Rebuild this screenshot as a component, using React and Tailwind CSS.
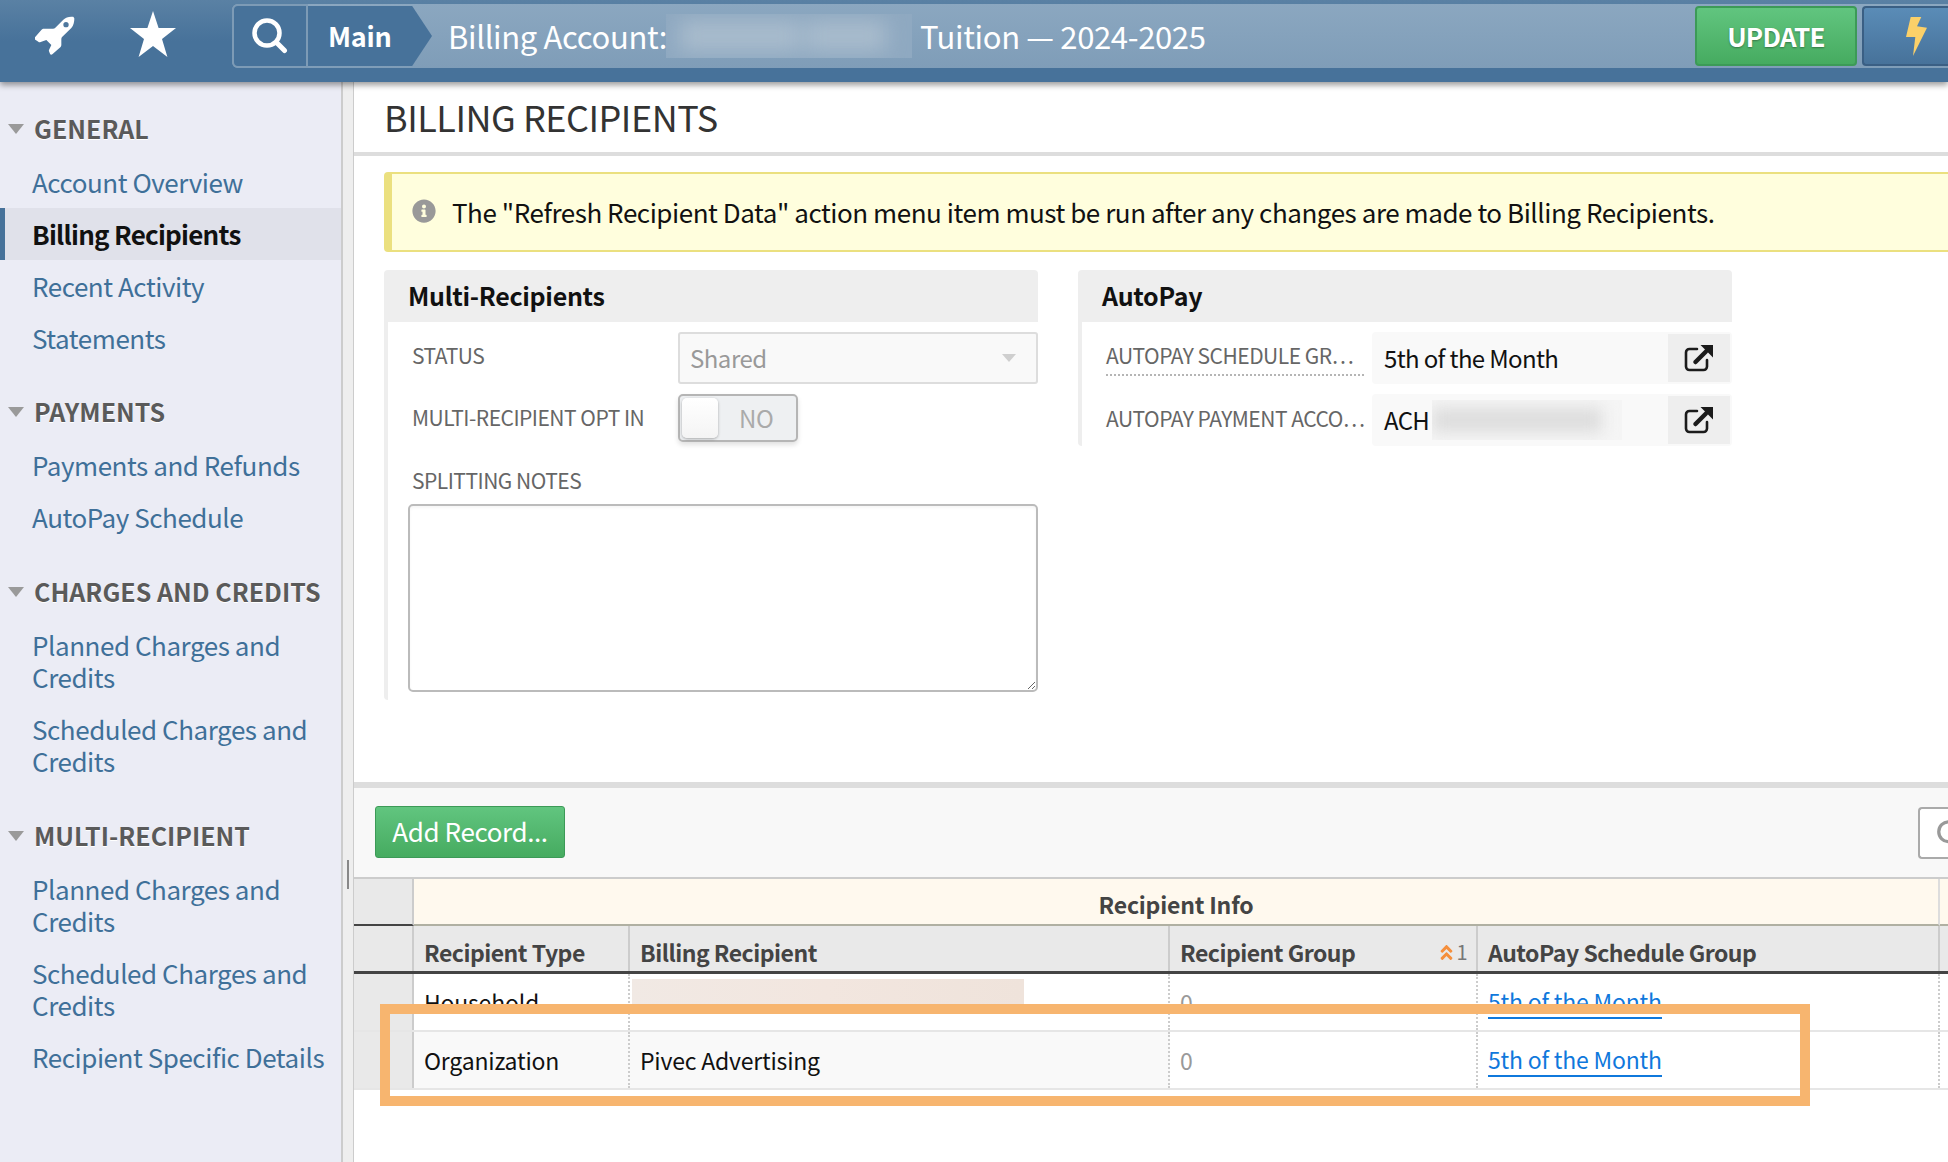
import React from "react";
import { FaInfoCircle, FaAngleDoubleUp } from "react-icons/fa";
import { Search } from "lucide-react";

function Rocket() {
  return (
    <svg viewBox="45 50 120 120" className="w-[40px] h-[40px]">
      <path fillRule="evenodd" fill="#fff" d="M158 53c3 0 5 2 5 5 0 9-2 20-9 28l-27 26c-2 2-3 4-3 7v18c0 3-1 5-3 7l-24 21c-3 2-6 1-7-2l-3-7c-1-2 0-4 1-6l6-13-15-15-17 6c-3 1-5 1-7-1l-9-6c-3-2-3-5-1-7l19-22c2-3 5-4 8-4h27c3 0 5-1 7-3l24-24c8-7 18-10 32-8zM138 68a8 8 0 1 0 0.1 16 8 8 0 1 0-0.1-16z" />
    </svg>
  );
}

function Star() {
  return (
    <svg viewBox="0 0 46 46" className="w-[46px] h-[46px]">
      <polygon fill="#fff" points="23,0 28.6,17 46,17 32,28 37.4,46 23,35 8.600,46 14,28 0,17 17.400,17" />
    </svg>
  );
}

function Bolt() {
  return (
    <svg viewBox="0 0 21 39" className="w-[21px] h-[39px]">
      <polygon fill="#fbd069" points="4.700,0 15.300,0 11,9.300 21,10.700 7,39 9.300,20 0,20" />
    </svg>
  );
}

function Magnifier() {
  return (
    <svg viewBox="0 0 36 36" className="w-[36px] h-[36px]" fill="none">
      <circle cx="15" cy="15" r="12.500" stroke="#fff" strokeWidth="4.500" />
      <line x1="24.500" y1="24.500" x2="32.500" y2="32.500" stroke="#fff" strokeWidth="5" strokeLinecap="round" />
    </svg>
  );
}

function ExternalLink() {
  return (
    <svg viewBox="0 0 32 32" className="w-[32px] h-[32px]" fill="none">
      <path d="M14 7H6.500C4.500 7 3 8.500 3 10.500v14C3 26.500 4.500 28 6.500 28h14c2 0 3.500-1.500 3.500-3.500V18" stroke="#1b1b1b" strokeWidth="2.600" strokeLinecap="round" />
      <path d="M12.500 20 L23 9.500" stroke="#1b1b1b" strokeWidth="4.500" strokeLinecap="round" />
      <polygon points="17.500,3 30,3 30,15.500" fill="#1b1b1b" />
    </svg>
  );
}

function Triangle() {
  return (
    <svg viewBox="0 0 16 10" className="w-[16px] h-[10px] shrink-0 mt-[1px]">
      <polygon points="0,0 16,0 8,10" fill="#9a9a9a" />
    </svg>
  );
}

function SectionHead({ label }) {
  return (
    <div className="h-[52px] mb-[2px] flex items-center pl-[8px] gap-[10px]">
      <Triangle />
      <span className="text-[25px] leading-[32px] font-bold text-[#5a5a5a] [text-shadow:0_1px_0_#fff]">{label}</span>
    </div>
  );
}

function NavLink({ label, active }) {
  if (active) {
    return (
      <div className="py-[10px] pl-[27px] border-l-[5px] border-[#47729a] bg-[#e0e1ea] text-[26px] tracking-[-0.75px] leading-[32px] font-semibold text-[#111]">{label}</div>
    );
  }
  return <div className="py-[10px] pl-[32px] pr-[8px] text-[26px] tracking-[-0.45px] leading-[32px] text-[#3f7099]">{label}</div>;
}

function Sidebar() {
  const groups = [
    ["GENERAL", "pt-[20px]", ["Account Overview", "Billing Recipients", "Recent Activity", "Statements"]],
    ["PAYMENTS", "pt-[21px]", ["Payments and Refunds", "AutoPay Schedule"]],
    ["CHARGES AND CREDITS", "pt-[22px]", ["Planned Charges and Credits", "Scheduled Charges and Credits"]],
    ["MULTI-RECIPIENT", "pt-[22px]", ["Planned Charges and Credits", "Scheduled Charges and Credits", "Recipient Specific Details"]],
  ];
  return (
    <aside className="w-[341px] shrink-0 bg-[#ebecf5]">
      {groups.map(([head, pad, items]) => (
        <div key={head} className={pad}>
          <SectionHead label={head} />
          {items.map((it) => (
            <NavLink key={it} label={it} active={it === "Billing Recipients"} />
          ))}
        </div>
      ))}
    </aside>
  );
}

function Header() {
  return (
    <header className="relative z-10 h-[82px] shrink-0 flex pt-[4px] bg-gradient-to-b from-[#5a81a4] to-[#47729a] to-50% shadow-[0_3px_6px_rgba(0,0,0,0.4)]">
      <div className="w-[232px] h-[64px] flex items-center shrink-0">
        <div className="ml-[35px]"><Rocket /></div>
        <div className="ml-[55px] -mt-[4px]"><Star /></div>
      </div>
      <div className="flex-1 h-[64px] flex items-center rounded-l-[6px] bg-gradient-to-b from-[#8ba7c0] to-[#7f9db8]">
        <div className="w-[76px] h-[64px] flex items-center justify-center rounded-l-[6px] border-[2px] border-[#7d9bb6] bg-[#47729a]">
          <Magnifier />
        </div>
        <div className="w-[124px] h-[60px] flex items-center pl-[20px] bg-[#47729a] [clip-path:polygon(0_0,84%_0,100%_50%,84%_100%,0_100%)] text-white text-[27px] tracking-[-0.2px] font-semibold">Main</div>
        <span className="w-[217px] ml-[16px] text-white text-[31px] tracking-[-0.35px] whitespace-nowrap">Billing Account:</span>
        <div className="w-[246px] h-[44px] ml-[1px] overflow-hidden bg-[#8fa9c1]">
          <div className="w-[246px] h-[44px] px-[14px] py-[8px] blur-[10px] flex items-center gap-[6px]">
            <div className="w-[120px] h-[30px] bg-[#a9bccd]" />
            <div className="w-[80px] h-[30px] bg-[#a9bccd]" />
          </div>
        </div>
        <span className="ml-[8px] text-white text-[31px] tracking-[-0.35px] whitespace-nowrap">Tuition — 2024-2025</span>
        <div className="ml-auto h-[60px] w-[162px] pb-[2px] mr-[5px] flex items-center justify-center rounded-[4px] border-[2px] border-[#3c9a57] bg-gradient-to-b from-[#61c57f] to-[#46ab60] text-white text-[26px] tracking-[-0.7px] font-bold [text-shadow:0_1px_2px_rgba(0,0,0,0.35)]">UPDATE</div>
        <div className="h-[60px] w-[86px] pl-[20px] flex items-center justify-center rounded-l-[4px] border-[2px] border-r-0 border-[#3a5f84] bg-gradient-to-b from-[#5a8cb7] to-[#47729a]">
          <Bolt />
        </div>
      </div>
    </header>
  );
}

function PanelHead({ title }) {
  return (
    <div className="h-[52px] flex items-center rounded-t-[4px] bg-[#eeeeee] pl-[24px] text-[25px] tracking-[-0.3px] font-semibold text-[#111]">{title}</div>
  );
}

function FieldLabel({ children, className = "" }) {
  return <span className={`text-[21px] tracking-[-0.5px] text-[#666] whitespace-nowrap ${className}`}>{children}</span>;
}

function MultiPanel() {
  return (
    <section className="w-[654px]">
      <PanelHead title="Multi-Recipients" />
      <div className="h-[378px] border-l-[4px] border-[#eeeeee] pl-[24px] pt-[10px] rounded-bl-[4px]">
        <div className="h-[52px] flex items-center">
          <FieldLabel className="w-[266px] -mt-[4px]">STATUS</FieldLabel>
          <div className="w-[360px] h-[52px] flex items-center justify-between pl-[10px] pr-[20px] rounded-[3px] border-[2px] border-[#dddddd] bg-[#f9f9f9] text-[24px] tracking-[-0.5px] text-[#999]">
            <span>Shared</span>
            <svg viewBox="0 0 14 8" className="w-[14px] h-[8px]"><polygon points="0,0 14,0 7,8" fill="#cfcfcf" /></svg>
          </div>
        </div>
        <div className="h-[48px] mt-[10px] flex items-center">
          <FieldLabel className="w-[266px]">MULTI-RECIPIENT OPT IN</FieldLabel>
          <div className="w-[120px] h-[48px] flex items-center pl-[2px] rounded-[5px] border-[2px] border-[#b5b5b5] bg-[#eef0f2] shadow-[0_3px_5px_rgba(0,0,0,0.12)]">
            <div className="w-[36px] h-[40px] rounded-[5px] bg-gradient-to-b from-white to-[#f4f4f4] shadow-[0_1px_3px_rgba(0,0,0,0.3)]" />
            <span className="ml-[21px] text-[24px] tracking-[-0.3px] text-[#aaa]">NO</span>
          </div>
        </div>
        <div className="h-[38px] mt-[20px] flex items-center"><FieldLabel>SPLITTING NOTES</FieldLabel></div>
        <textarea aria-label="Splitting notes" className="block w-[630px] h-[188px] -ml-[4px] mt-[4px] rounded-[5px] border-[2px] border-[#bbbbbb] bg-white shadow-[inset_0_2px_3px_rgba(0,0,0,0.04)]" />
      </div>
    </section>
  );
}

function AutoField({ label, dotted, children }) {
  return (
    <div className="h-[52px] flex items-center">
      <div className="w-[266px] pr-[8px] -mt-[2px]">
        <div className={`h-[38px] flex items-center ${dotted ? "border-b-[2px] border-dotted border-[#b5b5b5]" : ""}`}>
          <FieldLabel>{label}</FieldLabel>
        </div>
      </div>
      <div className="w-[360px] h-[52px] flex items-center rounded-[4px] bg-[#f9f9f9]">
        <div className="flex-1 flex items-center pl-[12px] text-[24px] tracking-[-0.65px] text-[#111] overflow-hidden">{children}</div>
        <div className="w-[62px] h-[48px] mr-[2px] flex items-center justify-center bg-[#eeeeee]">
          <ExternalLink />
        </div>
      </div>
    </div>
  );
}

function AutoPanel() {
  return (
    <section className="w-[654px]">
      <PanelHead title="AutoPay" />
      <div className="h-[124px] border-l-[4px] border-[#eeeeee] pl-[24px] pt-[10px] rounded-bl-[4px] flex flex-col gap-[10px]">
        <AutoField label="AUTOPAY SCHEDULE GR…" dotted>5th of the Month</AutoField>
        <AutoField label="AUTOPAY PAYMENT ACCO…">
          <span>ACH</span>
          <div className="ml-[3px] h-[40px] w-[190px] overflow-hidden bg-[#f5f5f5]">
            <div className="w-[170px] h-[40px] py-[8px] blur-[8px]"><div className="h-[24px] bg-[#dcdcdc]" /></div>
          </div>
        </AutoField>
      </div>
    </section>
  );
}

function HeadCell({ className = "", children }) {
  return (
    <div className={`h-[45px] flex items-center pl-[10px] pt-[7px] border-r-[2px] border-[#cccccc] text-[23px] tracking-[-0.5px] font-semibold text-[#444] ${className}`}>{children}</div>
  );
}

function BodyRow({ type, recipient, shaded, blur }) {
  const tint = shaded ? "bg-[#f9f9f9]" : "bg-white";
  const cell = "flex items-center pl-[10px] border-r-[2px] border-dotted border-[#cccccc] text-[23px] tracking-[-0.2px]";
  return (
    <div className="h-[58px] flex border-b-[2px] border-[#e6e6e6]">
      <div className="w-[60px] bg-[#e9e9e9] border-r-[2px] border-[#cccccc]" />
      <div className={`w-[216px] ${cell} ${tint} text-[#111]`}>{type}</div>
      <div className={`w-[540px] ${cell} ${tint} text-[#111]`}>
        {blur ? <div className="h-[26px] w-[392px] -ml-[8px] -mt-[20px] bg-gradient-to-r from-[#f1e9e4] via-[#f2e6df] to-[#efe3db]" /> : recipient}
      </div>
      <div className={`w-[308px] ${cell} text-[#999]`}>0</div>
      <div className={`w-[462px] ${cell}`}>
        <span className="leading-[32px] border-b-[2px] border-[#0f78dc] text-[#0f78dc]">5th of the Month</span>
      </div>
      <div className="flex-1" />
    </div>
  );
}

function RecordsTable() {
  return (
    <section className="border-t-[6px] border-[#dddddd]">
      <div className="h-[89px] flex items-center pl-[21px] bg-[#f8f8f8]">
        <div className="w-[190px] h-[52px] pb-[3px] -mt-[1px] flex items-center justify-center rounded-[3px] border-[1px] border-[#3c9a57] bg-gradient-to-b from-[#61c57f] to-[#46ab60] text-white text-[26px] tracking-[-0.4px]">Add Record...</div>
        <div className="ml-auto w-[30px] h-[52px] flex items-center pl-[15px] overflow-hidden rounded-l-[4px] border-[2px] border-r-0 border-[#aaaaaa] bg-white">
          <Search className="w-[30px] h-[30px] shrink-0 text-[#999]" strokeWidth={2.600} />
        </div>
      </div>
      <div className="h-[49px] flex border-t-[2px] border-[#cccccc]">
        <div className="w-[60px] bg-[#e9e9e9] border-r-[2px] border-[#cccccc] border-b-[2px] border-b-[#444]" />
        <div className="w-[1526px] flex items-center justify-center pt-[6px] bg-[#fff9ee] border-r-[2px] border-[#dddddd] border-b-[2px] border-b-[#b0b0a2] text-[23px] tracking-[-0.2px] font-semibold text-[#444]">Recipient Info</div>
        <div className="flex-1 bg-[#fff9ee] border-b-[2px] border-b-[#b0b0a2]" />
      </div>
      <div className="flex border-b-[3px] border-[#444] bg-[#e9e9e9]">
        <div className="w-[60px] border-r-[2px] border-[#cccccc]" />
        <HeadCell className="w-[216px]">Recipient Type</HeadCell>
        <HeadCell className="w-[540px]">Billing Recipient</HeadCell>
        <HeadCell className="w-[308px] pr-[9px]">
          <span>Recipient Group</span>
          <span className="ml-auto flex items-center text-[#777] text-[20px] font-normal">
            <FaAngleDoubleUp className="w-[19px] h-[19px] text-[#f58f3c]" />1
          </span>
        </HeadCell>
        <HeadCell className="w-[462px]">AutoPay Schedule Group</HeadCell>
      </div>
      <BodyRow type="Household" blur />
      <BodyRow type="Organization" recipient="Pivec Advertising" shaded />
    </section>
  );
}

export default function App() {
  return (
    <div className="relative w-[1948px] h-[1162px] overflow-hidden flex flex-col bg-white font-['Noto_Sans_CJK_SC','Noto_Sans',sans-serif]">
      <Header />
      <div className="flex flex-1 min-h-0">
        <Sidebar />
        <div className="w-[13px] shrink-0 flex flex-col items-center pt-[778px] bg-[#eeeeee] border-l-[2px] border-r-[1px] border-[#cccccc]">
          <div className="w-[2px] h-[29px] bg-[#888]" />
        </div>
        <main className="flex-1 min-w-0 overflow-hidden">
          <div className="h-[70px] flex items-center pl-[30px] pb-[2px] text-[36px] tracking-[-0.48px] text-[#333]">BILLING RECIPIENTS</div>
          <div className="h-[4px] bg-[#dddddd]" />
          <div className="mt-[16px] ml-[30px] w-[1700px] h-[80px] flex items-center pl-[20px] pb-[2px] gap-[16px] rounded-l-[4px] border-y-[2px] border-l-[8px] border-[#ebe07f] bg-[#fffedd] text-[26px] tracking-[-0.45px] text-[#111]">
            <FaInfoCircle className="w-[24px] h-[24px] text-[#999] shrink-0" />
            <span className="whitespace-nowrap">The "Refresh Recipient Data" action menu item must be run after any changes are made to Billing Recipients.</span>
          </div>
          <div className="mt-[18px] h-[512px] flex gap-[40px] pl-[30px]">
            <MultiPanel />
            <AutoPanel />
          </div>
          <RecordsTable />
        </main>
      </div>
      <div className="absolute left-[380px] top-[1004px] w-[1430px] h-[102px] border-[10px] border-[#f7b56f] pointer-events-none" />
    </div>
  );
}
